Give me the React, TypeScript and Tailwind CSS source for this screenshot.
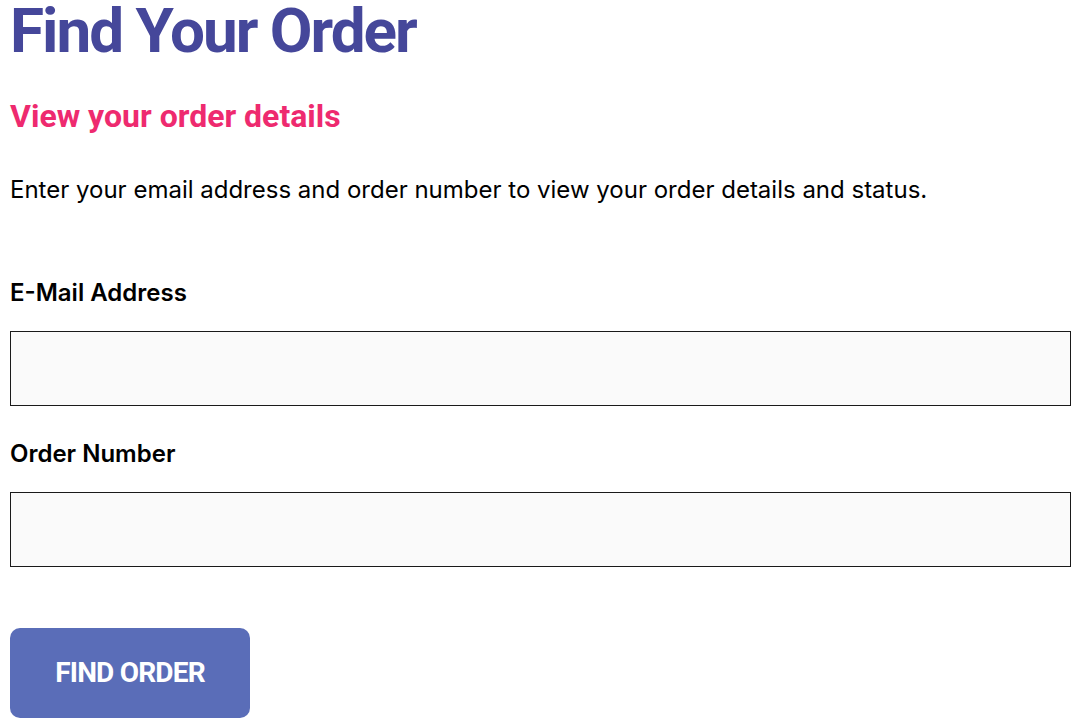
const heading = { fontFamily: 'Roboto, "DejaVu Sans", sans-serif' };
const body = { fontFamily: 'Inter, "Liberation Sans", sans-serif' };

function Field({ label, id }: { label: string; id: string }) {
  return (
    <div className="flex flex-col">
      <label htmlFor={id} className="text-[24px] font-semibold leading-[30px] text-black">
        {label}
      </label>
      <input
        id={id}
        type="text"
        className="mt-[23px] h-[75px] w-full border-[1.5px] border-[#1a1a1a] bg-[#fafafa] px-3 text-[20px] outline-none"
      />
    </div>
  );
}

export default function App() {
  return (
    <div className="min-h-screen bg-white pl-[10px] pr-[14px] pt-0" style={body}>
      <h1 className="text-[62px] font-bold leading-[62px] tracking-[-2px] text-[#45479a]" style={heading}>
        Find Your Order
      </h1>
      <h2 className="mt-[36px] text-[32px] font-bold leading-[36px] text-[#ee2a6f]" style={heading}>
        View your order details
      </h2>
      <p className="mt-[41px] text-[24px] leading-[30px] text-black">
        Enter your email address and order number to view your order details and status.
      </p>
      <form className="mt-[73px] flex flex-col gap-[33px]" onSubmit={(e) => e.preventDefault()}>
        <Field label="E-Mail Address" id="email" />
        <Field label="Order Number" id="order" />
        <div className="pt-[28px]">
          <button
            type="submit"
            className="h-[90px] w-[240px] rounded-[10px] bg-[#5a6db8] text-[28px] font-bold tracking-[-0.8px] text-white"
            style={heading}
          >
            FIND ORDER
          </button>
        </div>
      </form>
    </div>
  );
}
